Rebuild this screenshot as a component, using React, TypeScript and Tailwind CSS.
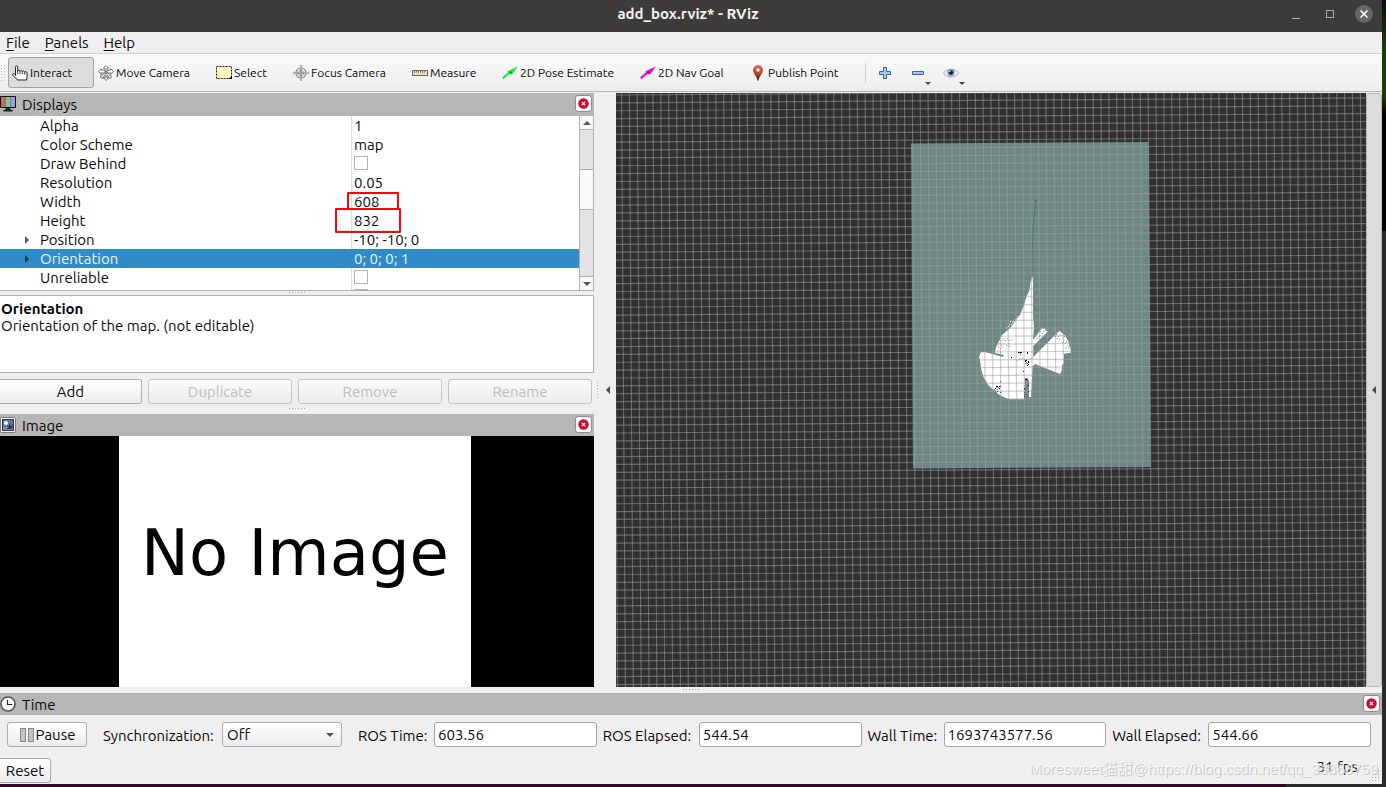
import React from "react";

type IconProps = { className?: string };

const HandIcon = () => (
  <svg viewBox="0 0 16 16" className="size-4 shrink-0">
    <path
      d="M3.5 10.5V2.2c0-2 2.2-2 2.2 0V6c.3-1.2 2.2-1 2.3.3.4-1.1 2.3-.9 2.4.4.4-1 2.2-.7 2.3.5.5-.8 2.3-.5 2.3.8v4.2c0 1-.5 1.400-.5 2.800H5.500C5 13 .5 11.500.6 9.500c.1-1.400 1.900-.9 2.900.4z"
      fill="#fff"
      stroke="#222"
      strokeWidth="1"
    />
    <path d="M5.700 6v3M8 6.300V9M10.400 6.700V9M12.700 7.200V9.500" stroke="#222" strokeWidth=".9" fill="none" />
  </svg>
);

const MoveIcon = () => (
  <svg viewBox="0 0 16 16" className="size-4 shrink-0" fill="#fff" stroke="#555" strokeWidth=".8">
    <path d="M8 .6 10.600 3.200H9V5.500L12.600 5V3.800L15.600 6.500 12.600 9V7.900L9.300 8l2.700 2.500.9-.9.2 3.400-3.400-.2.900-.9L8.900 9.700V13h1.500L8 15.500 5.600 13h1.500V9.700l-1.800 2.200.9.9-3.400.2.200-3.400.9.900L6.700 8l-3.300-.1V9L.4 6.500l3-2.700V5L7 5.500V3.200H5.400z" />
    <circle cx="8" cy="7.300" r="1.300" fill="#aaa" />
  </svg>
);

const SelectIcon = () => (
  <svg viewBox="0 0 16 16" className="size-4 shrink-0">
    <rect x=".5" y="1.500" width="15" height="12" fill="#fdf6bd" stroke="#222" strokeDasharray="2 1" />
    <path d="M16 10.500V14h-3.500z" fill="#000" />
  </svg>
);

const FocusIcon = () => (
  <svg viewBox="0 0 16 16" className="size-4 shrink-0" fill="none" stroke="#888" strokeWidth=".9">
    <circle cx="8" cy="8" r="5" strokeWidth="1.100" />
    <circle cx="8" cy="8" r="2.600" />
    <path d="M7.300.5h1.400V5H7.300zM7.300 11h1.400v4.500H7.300zM.5 7.300H5v1.400H.5zM11 7.300h4.500v1.400H11z" fill="#eee" strokeWidth=".7" />
    <path d="M5.500 8h5M8 5.500v5" stroke="#777" />
  </svg>
);

const RulerIcon = () => (
  <svg viewBox="0 0 16 16" className="size-4 shrink-0">
    <rect x=".5" y="5.500" width="15" height="5" fill="#eadfb0" stroke="#666" />
    <path d="M2.500 6v2M4.500 6v1.500M6.500 6v2M8.500 6v1.500M10.500 6v2M12.500 6v1.500" stroke="#666" strokeWidth=".8" />
  </svg>
);

const PoseIcon = ({ className }: IconProps) => (
  <svg viewBox="0 0 16 16" className={`size-4 shrink-0 ${className ?? ""}`} fill="currentColor">
    <path d="M.2 12.400 5.800 7.600 5.400 6.600 16 1.200 10.400 8.900 8.300 9.200 7.300 9 1.500 14.200z" />
    <path d="m7 6.700 3-.3-.6 2-1.700.3z" fill="#222" opacity=".5" />
  </svg>
);

const PinIcon = () => (
  <svg viewBox="0 0 16 16" className="size-4 shrink-0">
    <defs>
      <linearGradient id="pin" x1="0" y1="0" x2="0" y2="1">
        <stop offset="0" stopColor="#ef5b3a" />
        <stop offset=".5" stopColor="#b84a2c" />
        <stop offset="1" stopColor="#33251a" />
      </linearGradient>
    </defs>
    <path d="M8 .2a5 5 0 0 1 5 5c0 3.300-3.600 5.500-4.600 10.600h-.8C6.600 10.700 3 8.500 3 5.200a5 5 0 0 1 5-5z" fill="url(#pin)" />
    <circle cx="8" cy="5" r="1.800" fill="#fff" />
  </svg>
);

const EyeIcon = () => (
  <svg viewBox="0 0 16 16" className="size-4 shrink-0">
    <path d="M.5 8C3 3 13 3 15.500 8 13 13.500 3 13.500.5 8z" fill="#eee" stroke="#aaa" strokeWidth=".9" />
    <circle cx="8" cy="7.600" r="3.700" fill="#7c8fc9" />
    <circle cx="8" cy="7.600" r="2" fill="#111a33" />
    <circle cx="6.800" cy="6.300" r=".8" fill="#fff" />
  </svg>
);

const MonitorIcon = () => (
  <svg viewBox="0 0 16 16" className="size-4 shrink-0">
    <rect x="0" y="0" width="16" height="12" rx="1" fill="#111" />
    <rect x="1" y="1" width="4.700" height="10" fill="#c26b6b" />
    <rect x="5.700" y="1" width="4.600" height="10" fill="#7ccb86" />
    <rect x="10.300" y="1" width="4.700" height="10" fill="#9b9be0" />
    <path d="M6 12h4l1 2H5z" fill="#222" />
    <rect x="3" y="14" width="10" height="1.500" rx=".7" fill="#222" />
  </svg>
);

const PictureIcon = () => (
  <svg viewBox="0 0 16 16" className="size-4 shrink-0">
    <rect x=".5" y=".5" width="15" height="15" rx="1" fill="#f4f4f4" stroke="#777" />
    <rect x="2.500" y="2.500" width="11" height="11" fill="#5f779f" stroke="#26344d" />
    <path d="M3 10h10v3H3z" fill="#8a93a5" />
    <circle cx="6" cy="6" r="2" fill="#fffbd5" />
    <path d="M8 10.500 9.500 7l1.500 2 1.500-1v4H6z" fill="#2a3850" />
  </svg>
);

const ClockIcon = () => (
  <svg viewBox="0 0 16 16" className="size-4 shrink-0">
    <circle cx="8" cy="8" r="7" fill="#fff" stroke="#555" strokeWidth="1.600" />
    <path d="M7.500 4v4.500H12" fill="none" stroke="#222" strokeWidth="1.200" />
  </svg>
);

const PauseIcon = () => (
  <svg viewBox="0 0 16 16" className="size-4 shrink-0" fill="#c3c6c0" stroke="#888">
    <rect x="1.500" y="1.500" width="5" height="13" />
    <rect x="9.500" y="1.500" width="5" height="13" />
  </svg>
);

const Triangle = ({ className }: IconProps) => (
  <svg viewBox="0 0 8 4" className={className ?? "h-1 w-2"} fill="currentColor">
    <path d="M0 0h8L4 4z" />
  </svg>
);

const SideTriangle = () => (
  <svg viewBox="0 0 4 8" className="h-2 w-1" fill="#4a4a4a">
    <path d="M4 0v8L0 4z" />
  </svg>
);

const Grip = () => (
  <svg viewBox="0 0 17 2" className="h-0.5 w-[17px]" fill="#a8a8a8">
    {[0, 3, 6, 9, 12, 15].map((x) => (
      <rect key={x} x={x} y="0" width="1" height="1" />
    ))}
  </svg>
);

function ToolButton({ icon, label, width, active }: { icon: React.ReactNode; label: string; width: string; active?: boolean }) {
  return (
    <button
      type="button"
      className={`flex h-[31px] shrink-0 items-center gap-0.5 rounded-[3px] border px-[3px] pt-px text-xs whitespace-nowrap ${width} ${
        active ? "border-[#a3a3a3] bg-[#dcdcdc]" : "border-transparent"
      }`}
    >
      {icon}
      {label}
    </button>
  );
}

function CloseButton({ title }: { title: string }) {
  return (
    <button
      type="button"
      aria-label={`Close ${title}`}
      className="mb-0.5 grid size-[17px] place-items-center rounded-[3px] border border-[#8d8d8d] bg-[#fafafa]"
    >
      <svg viewBox="0 0 11 11" className="size-[11px]">
        <circle cx="5.500" cy="5.500" r="5.200" fill="#c8102e" />
        <path d="m3.900 3.900 3.200 3.200m0-3.200L3.900 7.100" stroke="#fff" strokeWidth="1.200" />
      </svg>
    </button>
  );
}

function PanelHeader({ icon, title }: { icon: React.ReactNode; title: string }) {
  return (
    <header className="flex h-[22px] shrink-0 items-center gap-1.5 bg-[#b6b6b6] pr-0.5">
      {icon}
      <h2 className="flex-1 pt-px">{title}</h2>
      <CloseButton title={title} />
    </header>
  );
}

type Row = { id: string; name?: string; value?: string; check?: boolean; branch?: boolean; selected?: boolean; mark?: string };

const rows: Row[] = [
  { id: "alpha", name: "Alpha", value: "1" },
  { id: "scheme", name: "Color Scheme", value: "map" },
  { id: "behind", name: "Draw Behind", check: true },
  { id: "resolution", name: "Resolution", value: "0.05" },
  { id: "width", name: "Width", value: "608", mark: "top-0 -left-[7px] h-[18px] w-[52px]" },
  { id: "height", name: "Height", value: "832", mark: "-top-[3px] -left-[19px] h-[25px] w-[66px]" },
  { id: "position", name: "Position", value: "-10; -10; 0", branch: true },
  { id: "orientation", name: "Orientation", value: "0; 0; 0; 1", branch: true, selected: true },
  { id: "unreliable", name: "Unreliable", check: true },
  { id: "next", check: true },
];

function PropertyTree() {
  return (
    <div className="flex h-[175px] shrink-0 overflow-hidden border-b border-[#b0b0b0] bg-white">
      <table className="h-0 flex-1 table-fixed border-separate border-spacing-0 self-start">
        <tbody>
          {rows.map((row) => (
            <tr key={row.id} className={`h-[19px] ${row.selected ? "bg-[#308cc6] text-[#e8f2fa]" : ""}`}>
              <th
                scope="row"
                className={`h-[19px] w-[352px] border-r p-0 text-left font-normal ${row.selected ? "border-[#3f86b8]" : "border-[#dcdcdc]"}`}
              >
                <span className="flex h-[19px] items-start pt-px">
                  <span className="flex h-[17px] w-10 items-center justify-center pl-3.5">
                    {row.branch && (
                      <svg viewBox="0 0 4 8" className="h-2 w-1" fill={row.selected ? "#123650" : "#555"}>
                        <path d="M0 0v8l4-4z" />
                      </svg>
                    )}
                  </span>
                  {row.name}
                </span>
              </th>
              <td className="h-[19px] p-0 pl-0.5">
                <span className={`relative flex h-[19px] items-start ${row.check ? "pt-0.5" : "pt-px"}`}>
                  {row.check ? (
                    <input
                      type="checkbox"
                      aria-label={row.name ?? "Property"}
                      className="size-3.5 appearance-none border border-[#b4b4b4] bg-white"
                    />
                  ) : (
                    row.value
                  )}
                  {row.mark && <span className={`absolute z-10 rounded-[1px] border-2 border-[#f60808] ${row.mark}`} />}
                </span>
              </td>
            </tr>
          ))}
        </tbody>
      </table>
      <div className="flex w-[15px] flex-col border-x border-[#b0b0b0] bg-[#e3e3e3] text-[#555]">
        <button type="button" aria-label="Scroll up" className="grid h-3.5 place-items-center border-b border-[#b0b0b0] bg-[#f8f8f8]">
          <Triangle className="h-1 w-2 rotate-180" />
        </button>
        <div className="h-[39px]" />
        <div className="h-[41px] border-y border-[#b0b0b0] bg-[#fafafa]" />
        <div className="flex-1" />
        <button type="button" aria-label="Scroll down" className="grid h-3.5 place-items-center border-t border-[#b0b0b0] bg-[#f8f8f8]">
          <Triangle />
        </button>
      </div>
    </div>
  );
}

const STEP = 7.86;
const gridIndexes = Array.from({ length: 280 }, (_, i) => i - 140);

const blackSpecks = [
  [174, 276], [177, 276], [180, 276], [183, 276], [201, 276], [201, 279], [153, 291], [195, 300], [198, 300], [195, 303],
  [204, 303], [204, 306], [204, 312], [201, 315], [189, 333], [195, 357], [198, 357], [204, 375], [192, 384], [192, 387],
  [204, 393], [192, 396], [192, 402], [192, 408], [120, 363], [108, 378], [111, 378], [117, 378], [120, 378], [105, 384],
  [111, 393], [120, 396], [117, 384],
];
const tealSpecks = [
  [122, 240], [128, 236], [134, 240], [140, 234], [146, 240], [155, 238], [118, 250], [124, 254], [131, 250], [138, 256],
  [146, 250], [114, 260], [121, 264], [128, 260], [136, 266], [148, 258], [112, 272], [120, 276], [180, 279], [180, 283],
  [198, 306], [198, 310], [195, 309], [201, 309], [288, 222], [294, 228], [301, 224], [307, 232], [298, 236], [309, 241],
  [314, 248], [318, 244], [320, 256], [325, 262], [290, 234], [286, 228], [305, 246], [240, 214], [246, 219], [250, 213],
  [237, 228], [232, 234], [312, 228], [316, 262], [102, 388], [106, 391], [111, 387], [115, 382], [109, 381], [112, 380],
];
const whiteSpecks = [
  [150, 183], [156, 186], [147, 191], [160, 183], [165, 178], [144, 198], [168, 174], [153, 193], [172, 168], [138, 202],
];

function MapView() {
  return (
    <svg className="h-full min-w-0 flex-1 bg-[#303030]" role="img" aria-label="Map view">
      <path d="M295 50.500 532.500 49 534.700 374 297 375.500z" fill="#6e8884" />
      <path d="M420 109q-4.500 30-4 75" fill="none" stroke="#4d6c7a" strokeWidth="1" strokeDasharray="8 1" />
      <rect x="419" y="107" width="2" height="2" fill="#6b5a5a" />
      <g transform="translate(344 167) scale(.3333)">
        <path
          d="M217 48 219 62 219 170 222 200 219 240 248 202 251 208 256 204 256 212 264 214 220 258 220 291 298 212 309 222 315 226 326 246 328 258 332 264 332 278 312 281 312 310 306 316 305 334 300 342 225 312 218 318 217 340 213 411 207 411 207 365 204 355 195 355 192 418 150 418 132 412 114 402 108 394 96 386 84 374 70 350 64 330 60 300 57 292 62 277 75 276 130 291 130 284 105 279 107 264 122 234 126 225 150 205 180 165 192 135 200 108 208 92 212 64z"
          fill="#fff"
        />
        <path d="M195 360h9v48h-9z" fill="#708a86" />
        <path d="M170 305q5-12 16-9l10 2q12 2 24-4" fill="none" stroke="#b9b4d8" strokeWidth="3" />
        {whiteSpecks.map(([x, y]) => (
          <rect key={`${x}-${y}`} x={x} y={y} width="4" height="3" fill="#fff" />
        ))}
        {tealSpecks.map(([x, y]) => (
          <rect key={`${x}-${y}`} x={x} y={y} width="3" height="3" fill="#708a86" />
        ))}
        {blackSpecks.map(([x, y]) => (
          <rect key={`${x}-${y}`} x={x} y={y} width="3" height="3" fill="#000" />
        ))}
      </g>
      <g transform="translate(416 266.500) rotate(-.38)" stroke="#a0a0a4" strokeOpacity=".5" strokeWidth="1.200">
        {gridIndexes.map((i) => (
          <React.Fragment key={i}>
            <line x1={i * STEP} x2={i * STEP} y1="-1100" y2="1100" />
            <line y1={i * STEP} y2={i * STEP} x1="-1100" x2="1100" />
          </React.Fragment>
        ))}
      </g>
    </svg>
  );
}

const clocks = [
  { id: "ros-time", label: "ROS Time:", value: "603.56", width: "w-[70px]" },
  { id: "ros-elapsed", label: "ROS Elapsed:", value: "544.54", width: "w-[90px]" },
  { id: "wall-time", label: "Wall Time:", value: "1693743577.56", width: "w-[70px]" },
  { id: "wall-elapsed", label: "Wall Elapsed:", value: "544.66", width: "w-[90px]" },
];

const raised = "border border-[#acacac] bg-linear-to-b from-white to-[#ececec] rounded-[3px]";

function TimePanel() {
  return (
    <section className="flex h-[91px] shrink-0 flex-col">
      <PanelHeader icon={<ClockIcon />} title="Time" />
      <div className="mt-[7px] flex h-[25px] items-center gap-1.5 pr-[11px] pl-[7px]">
        <button type="button" className={`flex h-[25px] w-20 items-center justify-center gap-px ${raised}`}>
          <PauseIcon />
          Pause
        </button>
        <label htmlFor="sync" className="ml-2.5 w-[113px] pt-0.5 whitespace-nowrap">
          Synchronization:
        </label>
        <div className="relative">
          <select id="sync" className={`h-[25px] w-[120px] appearance-none pl-1 ${raised}`}>
            <option>Off</option>
          </select>
          <Triangle className="pointer-events-none absolute top-[11px] right-2 h-1 w-2 text-[#555]" />
        </div>
        <div className="ml-2.5 flex min-w-0 flex-1 gap-1.5">
          {clocks.map((clock) => (
            <div key={clock.id} className="flex min-w-0 flex-auto items-center gap-1.5">
              <label htmlFor={clock.id} className={`shrink-0 pt-0.5 whitespace-nowrap ${clock.width}`}>
                {clock.label}
              </label>
              <input
                id={clock.id}
                type="text"
                readOnly
                size={1}
                value={clock.value}
                className="h-[25px] min-w-0 flex-1 rounded-[3px] border border-[#a5a5a5] bg-white px-[3px]"
              />
            </div>
          ))}
        </div>
      </div>
      <footer className="relative mt-[11px] flex flex-1 items-start justify-between pr-6">
        <button type="button" className={`h-[25px] w-[51px] rounded-l-none border-l-0 ${raised}`}>
          Reset
        </button>
        <span>31 fps</span>
        <p className="absolute top-0.5 right-1 font-['Liberation_Sans','Noto_Sans_CJK_SC',sans-serif] whitespace-nowrap text-white/60 [text-shadow:1px_1px_0_#c8c8c8]">
          Moresweet猫甜@https://blog.csdn.net/qq_33866759
        </p>
        <svg viewBox="0 0 12 12" className="absolute right-0.5 bottom-0.5 size-3" fill="#aaa">
          <path d="M10 1h1v1h-1zM7 4h1v1H7zM10 4h1v1h-1zM4 7h1v1H4zM7 7h1v1H7zM10 7h1v1h-1zM1 10h1v1H1zM4 10h1v1H4zM7 10h1v1H7zM10 10h1v1h-1z" />
        </svg>
      </footer>
    </section>
  );
}

export default function App() {
  return (
    <div className="flex h-screen flex-col overflow-hidden bg-[#300a24] font-['Ubuntu','Noto_Sans',sans-serif] text-[15px] leading-[17px] text-[#0a0a0a]">
      <div className="flex min-h-0 flex-1 bg-[#292b2c]">
        <div className="flex min-w-0 flex-1 flex-col bg-[#efefef]">
          <div className="grid h-8 shrink-0 grid-cols-[1fr_auto_1fr] items-center bg-[#3e3c3a] pb-1 text-white">
            <span />
            <h1 className="pr-1.5 pb-0.5 font-bold text-[#f2f1ee]">add_box.rviz* - RViz</h1>
            <div className="flex items-center justify-end gap-4 pr-[9px]">
              <button type="button" aria-label="Minimize" className="grid size-[18px] place-items-end justify-center pb-1">
                <span className="h-px w-2 bg-[#aaa]" />
              </button>
              <button type="button" aria-label="Maximize" className="grid size-[18px] place-items-center">
                <span className="size-2 border border-[#aaa]" />
              </button>
              <button type="button" aria-label="Close window" className="grid size-[18px] place-items-center rounded-full bg-[#686664]">
                <svg viewBox="0 0 8 8" className="size-2">
                  <path d="m.5.5 7 7m0-7-7 7" stroke="#fff" strokeWidth="1.500" />
                </svg>
              </button>
            </div>
          </div>

          <nav className="flex h-[22px] shrink-0 items-center gap-[15px] border-b border-[#d0d0d0] pb-px pl-1.5">
            {["File", "Panels", "Help"].map((item) => (
              <button key={item} type="button">
                <span className="underline underline-offset-2">{item[0]}</span>
                {item.slice(1)}
              </button>
            ))}
          </nav>

          <div
            role="toolbar"
            className="flex h-[38px] shrink-0 items-center border-b border-[#b4b4b4] bg-linear-to-b from-[#fafafa] to-[#ededed]"
          >
            <svg viewBox="0 0 8 16" className="h-4 w-2 shrink-0" fill="#bbb">
              {[0, 3, 6, 9, 12, 15].map((y) => (
                <path key={y} d={`M1 ${y}h1v1h-1zM4 ${y}h1v1h-1z`} />
              ))}
            </svg>
            <ToolButton icon={<HandIcon />} label="Interact" width="w-[86px]" active />
            <ToolButton icon={<MoveIcon />} label="Move Camera" width="w-[118px]" />
            <ToolButton icon={<SelectIcon />} label="Select" width="w-[77px]" />
            <ToolButton icon={<FocusIcon />} label="Focus Camera" width="w-[119px]" />
            <ToolButton icon={<RulerIcon />} label="Measure" width="w-[90px]" />
            <ToolButton icon={<PoseIcon className="text-[#14f03c]" />} label="2D Pose Estimate" width="w-[138px]" />
            <ToolButton icon={<PoseIcon className="text-[#f500d8]" />} label="2D Nav Goal" width="w-[110px]" />
            <ToolButton icon={<PinIcon />} label="Publish Point" width="w-[119px]" />
            <div className="mr-3 h-5 w-px bg-[#cfcfcf]" />
            <button type="button" aria-label="Add tool" className="mr-[19px]">
              <svg viewBox="0 0 14 14" className="size-3.5">
                <path d="M5.500 1.500h3v4h4v3h-4v4h-3v-4h-4v-3h4z" fill="#a9c8e8" stroke="#3465a4" />
              </svg>
            </button>
            <button type="button" aria-label="Remove tool" className="relative mr-[18px]">
              <svg viewBox="0 0 14 14" className="size-3.5">
                <path d="M1.500 5.500h11v3h-11z" fill="#a9c8e8" stroke="#3465a4" />
              </svg>
              <Triangle className="absolute top-4 left-3.5 h-[3px] w-1.5 text-[#444]" />
            </button>
            <button type="button" aria-label="Tool visibility" className="relative">
              <EyeIcon />
              <Triangle className="absolute top-[17px] left-4 h-[3px] w-1.5 text-[#444]" />
            </button>
          </div>

          <main className="mt-px flex min-h-0 flex-1">
            <div className="flex w-[594px] shrink-0 flex-col">
              <section className="flex shrink-0 flex-col">
                <div className="bg-[#b6b6b6] pb-px">
                  <PanelHeader icon={<MonitorIcon />} title="Displays" />
                </div>
                <PropertyTree />
                <div className="flex h-1 items-center justify-center">
                  <Grip />
                </div>
                <div className="h-[78px] border border-l-0 border-[#b0b0b0] bg-white pt-1 pl-px">
                  <h3 className="font-bold">Orientation</h3>
                  <p>Orientation of the map. (not editable)</p>
                </div>
                <div className="mt-1.5 mr-0.5 flex gap-1.5">
                  <button type="button" className={`h-[25px] w-[142px] rounded-l-none border-l-0 ${raised}`}>
                    Add
                  </button>
                  {["Duplicate", "Remove", "Rename"].map((name) => (
                    <button
                      key={name}
                      type="button"
                      disabled
                      className="h-[25px] flex-1 rounded-[3px] border border-[#c6c6c6] bg-linear-to-b from-[#fafafa] to-[#ececec] text-[#bdbdbd]"
                    >
                      {name}
                    </button>
                  ))}
                </div>
                <div className="flex h-2.5 items-center justify-center">
                  <Grip />
                </div>
              </section>
              <section className="flex min-h-0 flex-1 flex-col">
                <PanelHeader icon={<PictureIcon />} title="Image" />
                <div className="flex min-h-0 flex-1 justify-center bg-black pr-1">
                  <div className="flex w-[352px] items-center justify-center bg-white pb-4 font-['DejaVu_Sans',sans-serif] text-[64px] whitespace-nowrap text-black">
                    No Image
                  </div>
                </div>
              </section>
            </div>
            <div className="flex w-[22px] shrink-0 items-center justify-between pr-1.5 pl-[3px]">
              <svg viewBox="0 0 1 16" className="h-4 w-px" fill="#a8a8a8">
                {[0, 3, 6, 9, 12, 15].map((y) => (
                  <rect key={y} y={y} width="1" height="1" />
                ))}
              </svg>
              <SideTriangle />
            </div>
            <MapView />
            <button
              type="button"
              aria-label="Show right panel"
              className="grid w-4 shrink-0 place-items-center rounded-[3px] border border-[#b8b8b8] bg-[#dcdcdc]"
            >
              <SideTriangle />
            </button>
          </main>
          <div className="flex h-1.5 shrink-0 items-center justify-center">
            <Grip />
          </div>
          <TimePanel />
        </div>
        <div className="flex w-1 shrink-0 flex-col">
          <div className="h-24 bg-linear-to-b from-[#051005] via-[#1d3d08] to-[#1d3d08]" />
          <div className="h-[135px] bg-linear-to-b from-[#1d3d08] to-black to-20%" />
        </div>
      </div>
      <div className="flex h-[3px] shrink-0 justify-end">
        <div className="w-[100px] bg-[#292b2c]" />
      </div>
    </div>
  );
}
